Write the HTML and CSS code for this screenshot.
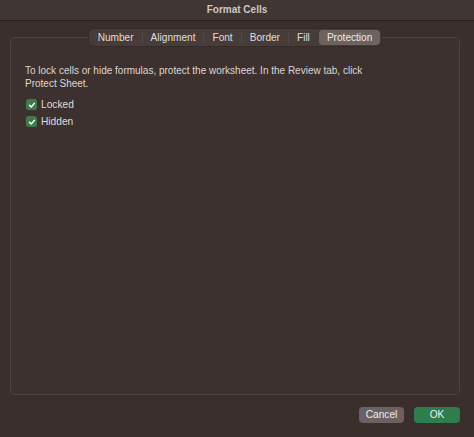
FILE: index.html
```html
<!DOCTYPE html>
<html>
<head>
<meta charset="utf-8">
<link rel="stylesheet" href="styles.css">
</head>
<body>
<div class="window">
  <div class="titlebar">Format Cells</div>
  <div class="content">
    <div class="tabs">
      <div class="tab first">Number</div>
      <div class="sep"></div>
      <div class="tab">Alignment</div>
      <div class="sep"></div>
      <div class="tab">Font</div>
      <div class="sep"></div>
      <div class="tab">Border</div>
      <div class="sep"></div>
      <div class="tab">Fill</div>
      <div class="tab selected">Protection</div>
    </div>
    <div class="panel">
      <p class="desc">To lock cells or hide formulas, protect the worksheet. In the Review tab, click Protect Sheet.</p>
      <label class="check"><span class="box"><svg viewBox="0 0 12 12" width="12" height="12"><path d="M3 6.3 L5.1 8.4 L9 3.8" fill="none" stroke="#fff" stroke-width="1.7" stroke-linecap="round" stroke-linejoin="round"/></svg></span>Locked</label>
      <label class="check"><span class="box"><svg viewBox="0 0 12 12" width="12" height="12"><path d="M3 6.3 L5.1 8.4 L9 3.8" fill="none" stroke="#fff" stroke-width="1.7" stroke-linecap="round" stroke-linejoin="round"/></svg></span>Hidden</label>
    </div>
    <div class="buttons">
      <button class="btn cancel">Cancel</button>
      <button class="btn ok">OK</button>
    </div>
  </div>
</div>
</body>
</html>
```

FILE: styles.css
```css
html, body {
  margin: 0;
  padding: 0;
}
body {
  background: #3a2f2c;
  font-family: "Liberation Sans", Arial, sans-serif;
  color: #ddd6d3;
  width: 474px;
  height: 437px;
  overflow: hidden;
}
.window {
  display: flex;
  flex-direction: column;
  height: 437px;
}
.titlebar {
  height: 21px;
  line-height: 20px;
  text-align: center;
  font-size: 10px;
  font-weight: bold;
  color: #cfc8c5;
  background: #403633;
  border-bottom: 1px solid #2a211f;
  box-sizing: border-box;
}
.content {
  padding: 8px 14px 0 10px;
  display: flex;
  flex-direction: column;
  flex: 1;
}
.tabs {
  align-self: center;
  display: flex;
  align-items: center;
  height: 17px;
  background: #463c39;
  border-radius: 5px;
  box-shadow: 0 0 0 0.5px #2e2522;
  margin-bottom: -9px;
  position: relative;
  z-index: 1;
  padding: 0 1px;
  font-size: 10.1px;
  color: #e3dcd9;
}
.tab {
  padding: 0 8px;
  height: 15px;
  line-height: 15px;
  border-radius: 4px;
}
.tab.first {
  padding-left: 8px;
}
.tab.selected {
  background: #6b6360;
  color: #f0eae8;
  padding: 0 8px 0 8px;
  margin-left: 1px;
}
.sep {
  width: 1px;
  height: 10px;
  background: #54494a;
}
.panel {
  height: 358px;
  box-sizing: border-box;
  border: 1px solid #4d4340;
  border-radius: 5px;
  background: #3c312e;
  padding: 26px 14px 0 14px;
}
.desc {
  margin: 0 0 6px 0;
  max-width: 350px;
  font-size: 10px;
  line-height: 13px;
  color: #ddd6d3;
}
.check {
  display: flex;
  align-items: center;
  height: 17px;
  font-size: 10.2px;
  color: #e0d9d6;
}
.box {
  width: 11px;
  height: 11px;
  border-radius: 2.5px;
  background: #3e7a4b;
  margin: 0 4px 0 1px;
  display: flex;
  align-items: center;
  justify-content: center;
}
.box svg {
  width: 10px;
  height: 10px;
}
.buttons {
  display: flex;
  justify-content: flex-end;
  gap: 10px;
  margin-top: 12px;
}
.btn {
  height: 16px;
  border: none;
  border-radius: 4px;
  font-family: "Liberation Sans", Arial, sans-serif;
  font-size: 10.2px;
  padding: 0;
  color: #eee;
  line-height: 16px;
}
.cancel {
  width: 45px;
  background: #6a6160;
}
.ok {
  width: 46px;
  background: #2f7c4c;
}
```
